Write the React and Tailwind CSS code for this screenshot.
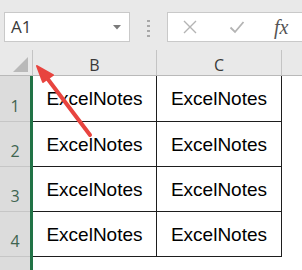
import React from 'react';

const rows = [
  { n: 1, h: 'h-[46px]' },
  { n: 2, h: 'h-[45px]' },
  { n: 3, h: 'h-[45px]' },
  { n: 4, h: 'h-[45px]' },
];

function Toolbar() {
  return (
    <div className="flex h-[50px] items-start pt-3 bg-[#e9e9e9]">
      <div className="ml-1 flex h-[30px] w-[126px] items-center justify-between border border-[#c9c9c9] bg-white pl-[6px] pr-2">
        <span className="text-[17px] text-[#3a3a3a] [font-family:'Open_Sans',sans-serif]">A1</span>
        <svg width="8" height="5" viewBox="0 0 8 5">
          <path d="M0 0 L8 0 L4 4.5 Z" fill="#7a7a7a" />
        </svg>
      </div>
      <div className="ml-[17px] mt-[8px] flex w-[3px] flex-col gap-[3px]">
        <div className="h-[2px] w-[3px] bg-[#a8a8a8]" />
        <div className="h-[2px] w-[3px] bg-[#a8a8a8]" />
        <div className="h-[2px] w-[3px] bg-[#a8a8a8]" />
        <div className="h-[2px] w-[3px] bg-[#a8a8a8]" />
      </div>
      <div className="ml-[17px] flex h-[30px] flex-1 items-center border border-r-0 border-[#c9c9c9] bg-white">
        <svg className="ml-[15px]" width="14" height="14" viewBox="0 0 14 14">
          <path d="M1 1 L13 13 M13 1 L1 13" stroke="#b4b4b4" strokeWidth="1.4" />
        </svg>
        <svg className="ml-[32px]" width="16" height="14" viewBox="0 0 16 14">
          <path d="M1.5 7.5 L6 12 L14.5 2" stroke="#b4b4b4" strokeWidth="1.8" fill="none" />
        </svg>
        <span className="ml-[29px] text-[20px] italic text-[#555] [font-family:'Liberation_Serif',serif]">fx</span>
      </div>
    </div>
  );
}

function HeaderRow() {
  return (
    <div className="flex h-[26px] border-b border-[#b9b9b9] bg-[#e9e9e9]">
      <div className="relative w-[33px] border-r border-[#c4c4c4]">
        <svg className="absolute bottom-[3px] right-[4px]" width="15" height="15" viewBox="0 0 15 15">
          <path d="M15 0 L15 15 L0 15 Z" fill="#b9b9b9" />
        </svg>
      </div>
      <div className="flex w-[124px] items-center justify-center border-r border-[#c4c4c4] pt-1 text-[16px] text-[#3a3a3a] [font-family:'Open_Sans',sans-serif]">
        B
      </div>
      <div className="flex w-[125px] items-center justify-center border-r border-[#c4c4c4] pt-1 text-[16px] text-[#3a3a3a] [font-family:'Open_Sans',sans-serif]">
        C
      </div>
      <div className="flex-1" />
    </div>
  );
}

function Cell({ w }) {
  return (
    <div className={`flex ${w} items-center justify-center border-b border-r border-[#1e1e1e] bg-white pt-[2px] text-[19px] text-black [font-family:'Liberation_Sans',Arial,sans-serif]`}>
      ExcelNotes
    </div>
  );
}

export default function App() {
  return (
    <div className="relative h-[270px] w-[302px] overflow-hidden bg-white">
      <Toolbar />
      <HeaderRow />
      {rows.map((r) => (
        <div key={r.n} className={`flex ${r.h}`}>
          <div className="flex w-[30px] items-end justify-center border-b border-[#c6c6c6] bg-[#dcdcdc] pb-[3px] text-[16px] text-[#3f6450] [font-family:'Open_Sans',sans-serif]">
            {r.n}
          </div>
          <div className="w-[3px] bg-[#217346]" />
          <Cell w="w-[124px]" />
          <Cell w="w-[125px]" />
          <div className="flex-1 bg-white" />
        </div>
      ))}
      <div className="flex h-[20px]">
        <div className="w-[30px] bg-[#dcdcdc]" />
        <div className="w-[3px] bg-[#217346]" />
        <div className="flex-1 bg-white" />
      </div>

      <svg className="absolute left-0 top-0" width="302" height="270" viewBox="0 0 302 270">
        <path d="M90 135 L47 78" stroke="#e8443f" strokeWidth="4" strokeLinecap="round" />
        <path d="M37 66 L53 75 L43 82 Z" fill="#e8443f" stroke="#e8443f" strokeWidth="2" strokeLinejoin="round" />
      </svg>
    </div>
  );
}
